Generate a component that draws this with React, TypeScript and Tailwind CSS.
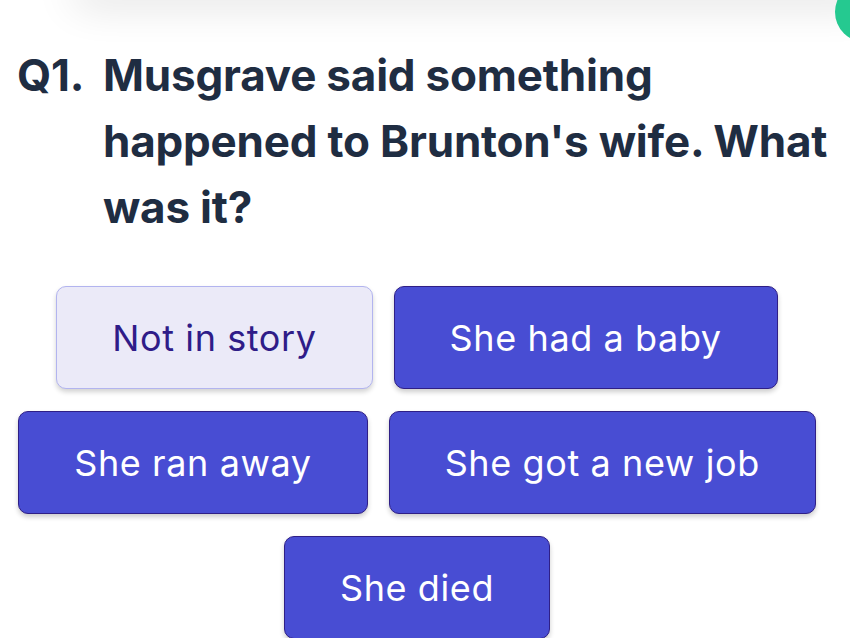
import React from "react";

const options = [
  { label: "Not in story", light: true },
  { label: "She had a baby" },
  { label: "She ran away" },
  { label: "She got a new job" },
  { label: "She died" },
];

export default function App() {
  return (
    <div className="relative w-[850px] h-[638px] overflow-hidden bg-white" style={{ fontFamily: "Inter, 'Noto Sans', sans-serif" }}>
      <div className="h-[20px] -mt-[20px] ml-[70px] -mr-[20px] rounded-bl-[40px] bg-white shadow-[0_4px_40px_rgba(0,0,0,0.16)]" />
      <div className="absolute left-[835px] -top-[18px] w-[60px] h-[60px] rounded-full bg-[#25c990]" />
      <div className="flex pl-[17px] pt-[42px] text-[#1f2d42] font-bold text-[44px] leading-[66px] tracking-[-0.2px]">
        <div className="w-[86px] shrink-0">Q1.</div>
        <div className="w-[745px]">Musgrave said something happened to Brunton's wife. What was it?</div>
      </div>
      <div className="mt-[46px] pr-[16px] flex flex-wrap justify-center gap-x-[21px] gap-y-[22px]">
        {options.map((o) => (
          <div
            key={o.label}
            className={
              o.light
                ? "h-[103px] px-[55px] flex items-center rounded-[10px] border-[1.5px] border-[#b2b4ef] bg-[#ebeaf8] text-[#2f1c88] text-[36px] tracking-[0.6px] shadow-[0_3px_5px_rgba(0,0,0,0.18)]"
                : "h-[103px] px-[55px] flex items-center rounded-[10px] border-[1.5px] border-[#2f1f86] bg-[#484dd3] text-white text-[36px] tracking-[0.6px] shadow-[0_3px_5px_rgba(0,0,0,0.2)]"
            }
          >
            {o.label}
          </div>
        ))}
      </div>
    </div>
  );
}
